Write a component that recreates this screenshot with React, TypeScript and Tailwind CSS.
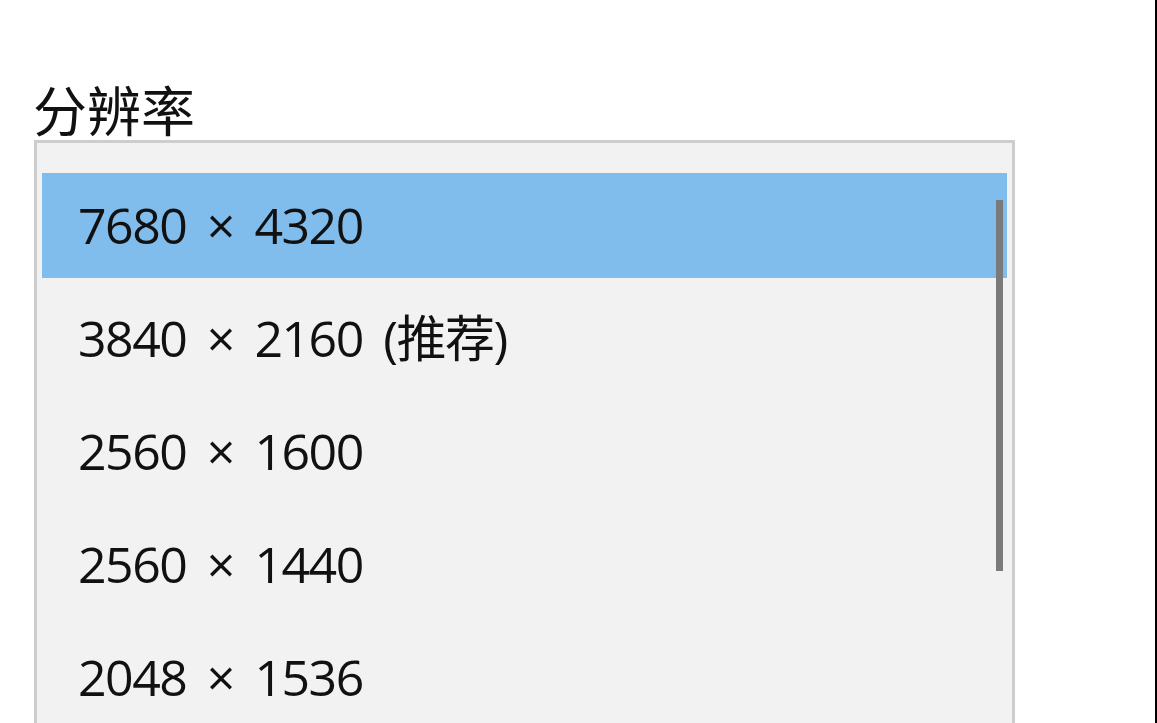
import React from 'react';

const resolutions = [
  '7680 × 4320',
  '3840 × 2160 (推荐)',
  '2560 × 1600',
  '2560 × 1440',
  '2048 × 1536',
  '1920 × 1440',
];

export default function App() {
  return (
    <div className="relative h-[723px] w-[1157px] overflow-hidden border-r-2 border-black bg-white font-['Open_Sans','Noto_Sans_CJK_SC',sans-serif] text-[#111]">
      {/* heading */}
      <h1 className="ml-[33px] mt-[82px] h-[58px] font-['Noto_Sans_CJK_SC',sans-serif] text-[54px] leading-[54px] font-normal">
        分辨率
      </h1>

      {/* dropdown list */}
      <div className="relative ml-[34px] h-[700px] w-[981px] border-[3px] border-[#cdcdcd] bg-[#f2f2f2] pt-[26px]">
        {resolutions.map((r, i) => (
          <div key={r} className="h-[113px] px-[5px] py-[4px]">
            <div
              className={
                'flex h-full items-center pl-[36px] text-[50px] tracking-[-1.5px] [word-spacing:9px] ' +
                (i === 0 ? 'bg-[#80bdec]' : '')
              }
            >
              {r}
            </div>
          </div>
        ))}

        {/* scrollbar thumb */}
        <div className="absolute left-[959px] top-[57px] h-[371px] w-[7px] bg-[#7a7a7a]" />
      </div>
    </div>
  );
}
